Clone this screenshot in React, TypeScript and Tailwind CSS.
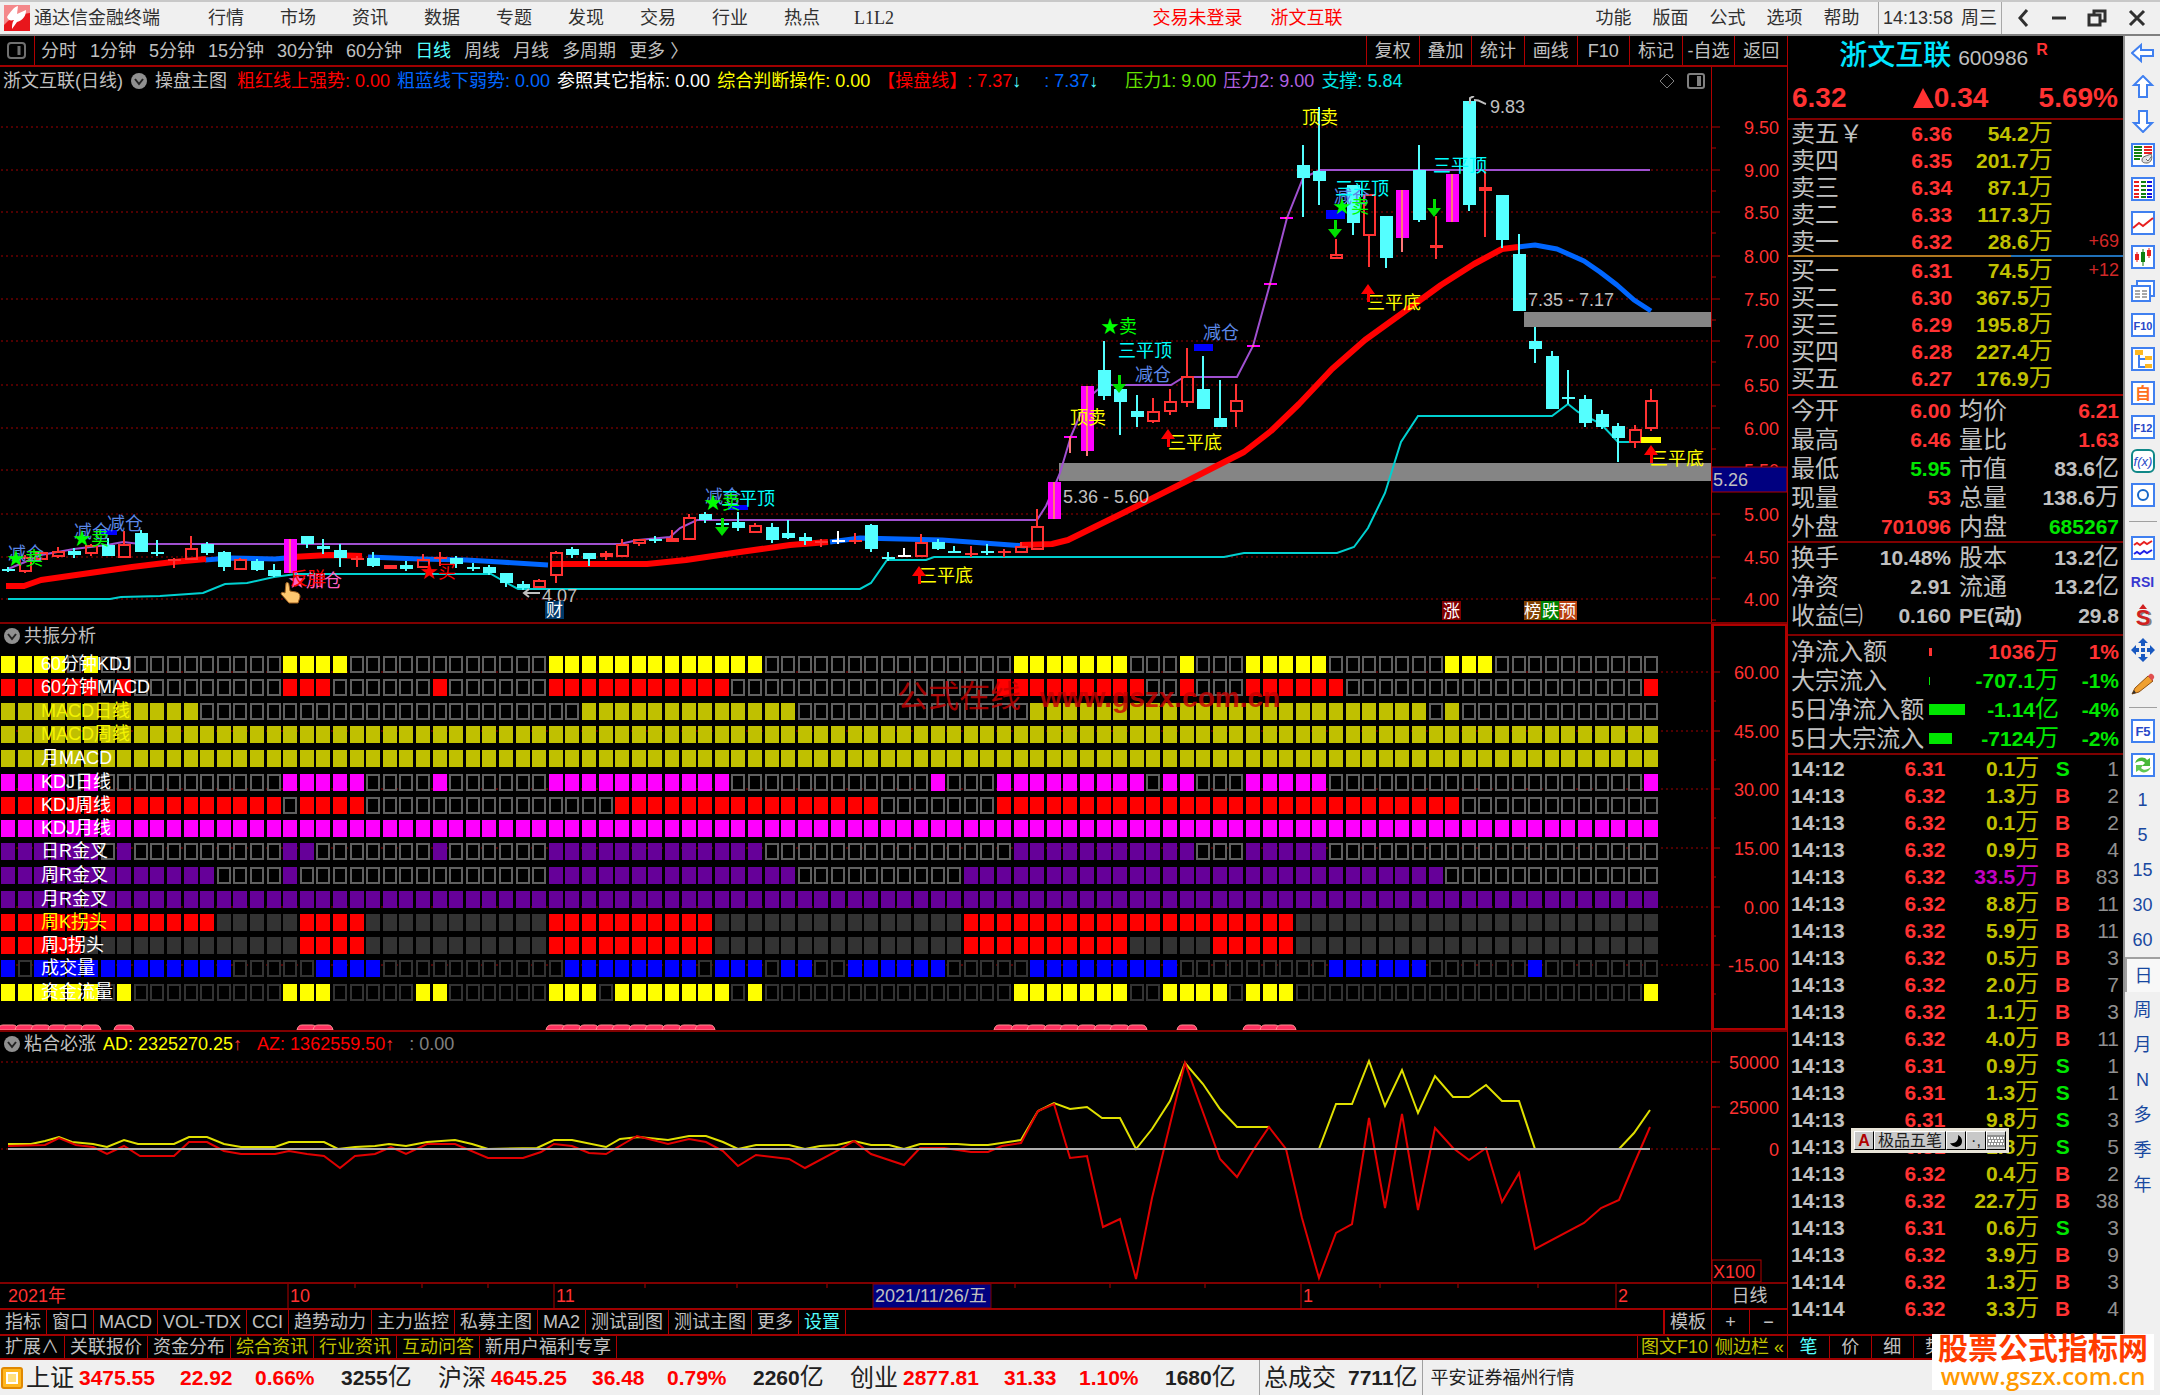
import type { ReactNode } from 'react'
import { clsx } from 'clsx'

const FONT = "font-['Liberation_Sans','Noto_Sans_CJK_SC',sans-serif]"

// ── Data ──────────────────────────────────────────────────────────────────

const mainMenu = ['行情', '市场', '资讯', '数据', '专题', '发现', '交易', '行业', '热点', 'L1L2']
const toolMenu = ['功能', '版面', '公式', '选项', '帮助']
const periods = ['分时', '1分钟', '5分钟', '15分钟', '30分钟', '60分钟', '日线', '周线', '月线', '多周期', '更多 〉']
const chartActions = ['复权', '叠加', '统计', '画线', 'F10', '标记', '-自选', '返回']

const indicatorTabs = ['指标', '窗口', 'MACD', 'VOL-TDX', 'CCI', '趋势动力', '主力监控', '私募主图', 'MA2', '测试副图', '测试主图', '更多', '设置']
const infoTabs = [
  { label: '扩展∧', color: 'text-[#c0c0c0]' },
  { label: '关联报价', color: 'text-[#c0c0c0]' },
  { label: '资金分布', color: 'text-[#c0c0c0]' },
  { label: '综合资讯', color: 'text-[#c0c000]' },
  { label: '行业资讯', color: 'text-[#c0c000]' },
  { label: '互动问答', color: 'text-[#c0c000]' },
  { label: '新用户福利专享', color: 'text-[#c0c0c0]' },
]

type Kind = 'up' | 'down' | 'limit' | 'red' | 'flat'
type Candle = [Kind, number, number, number, number]

// kind, high, body top, body bottom, low
const candles: Candle[] = [
  ['down', 567, 569, 571, 572], ['up', 555, 557, 571, 573], ['up', 552, 552, 559, 559], ['up', 547, 551, 556, 558],
  ['down', 548, 551, 555, 558], ['up', 544, 545, 553, 556], ['down', 538, 545, 556, 556], ['up', 531, 544, 557, 557],
  ['down', 530, 533, 552, 552], ['down', 540, 552, 553, 556], ['red', 558, 559, 561, 568], ['up', 536, 548, 559, 559],
  ['down', 542, 544, 553, 555], ['down', 551, 552, 567, 571], ['up', 558, 559, 569, 570], ['down', 559, 561, 570, 571],
  ['down', 564, 570, 576, 577], ['limit', 539, 539, 573, 573], ['down', 536, 536, 544, 548], ['down', 539, 546, 549, 554],
  ['down', 544, 550, 558, 567], ['red', 556, 558, 559, 567], ['down', 552, 558, 566, 567], ['up', 565, 565, 568, 568],
  ['down', 561, 565, 569, 571], ['up', 554, 559, 567, 568], ['red', 552, 557, 558, 566], ['down', 556, 558, 564, 568],
  ['down', 563, 567, 568, 571], ['down', 565, 567, 573, 575], ['down', 573, 573, 583, 587], ['down', 581, 584, 588, 590],
  ['up', 579, 580, 587, 588], ['up', 551, 552, 575, 583], ['down', 547, 549, 555, 558], ['down', 553, 553, 559, 566],
  ['up', 551, 553, 556, 560], ['up', 539, 544, 556, 557], ['up', 539, 539, 543, 546], ['down', 536, 539, 540, 543],
  ['up', 530, 538, 541, 541], ['up', 514, 517, 539, 539], ['down', 512, 514, 520, 523], ['down', 518, 523, 524, 527],
  ['down', 512, 522, 528, 531], ['up', 523, 525, 532, 532], ['down', 523, 527, 540, 543], ['down', 520, 533, 538, 539],
  ['down', 533, 537, 541, 545], ['red', 539, 541, 542, 547], ['flat', 531, 540, 541, 544], ['red', 533, 540, 541, 544],
  ['down', 524, 525, 549, 552], ['down', 552, 557, 558, 561], ['flat', 548, 555, 556, 556], ['up', 534, 542, 556, 557],
  ['down', 539, 542, 549, 550], ['down', 546, 551, 552, 552], ['red', 546, 553, 555, 557], ['down', 544, 551, 552, 555],
  ['red', 549, 551, 553, 557], ['up', 542, 546, 552, 552], ['up', 509, 526, 549, 549], ['limit', 482, 482, 519, 519],
  ['limit', 436, 436, 438, 453], ['limit', 386, 386, 451, 456], ['down', 341, 370, 396, 400], ['down', 375, 389, 402, 435],
  ['down', 395, 411, 417, 427], ['up', 398, 411, 421, 423], ['up', 389, 401, 411, 415], ['up', 348, 376, 402, 407],
  ['down', 356, 389, 409, 409], ['down', 380, 418, 427, 427], ['up', 384, 400, 411, 427], ['limit', 345, 345, 347, 347],
  ['limit', 283, 283, 285, 285], ['limit', 217, 217, 219, 219], ['down', 145, 165, 178, 217], ['down', 107, 171, 181, 205],
  ['up', 239, 254, 258, 258], ['down', 185, 185, 223, 235], ['up', 194, 194, 235, 267], ['down', 216, 216, 258, 268],
  ['limit', 190, 190, 238, 252], ['down', 145, 170, 220, 222], ['red', 216, 245, 248, 259], ['limit', 174, 174, 222, 222],
  ['down', 101, 101, 205, 211], ['up', 170, 187, 190, 237], ['down', 195, 195, 240, 248], ['down', 234, 254, 311, 311],
  ['down', 327, 341, 349, 363], ['down', 351, 356, 409, 409], ['down', 370, 397, 399, 404], ['down', 395, 399, 423, 427],
  ['down', 410, 414, 427, 429], ['down', 423, 426, 438, 462], ['up', 425, 429, 442, 448], ['up', 389, 400, 428, 431],
]

const candleColor: Record<Kind, string> = {
  up: '#ff3232',
  down: '#54ffff',
  limit: '#ff00ff',
  red: '#ff3232',
  flat: '#ffffff',
}

const barX = (i: number) => Math.round(8 + i * 16.6)

const priceTicks = [
  ['9.50', 127], ['9.00', 170], ['8.50', 212], ['8.00', 256], ['7.50', 299], ['7.00', 341],
  ['6.50', 385], ['6.00', 428], ['5.50', 470], ['5.00', 514], ['4.50', 557], ['4.00', 599],
] as [string, number][]
const heatTicks = [
  ['60.00', 671], ['45.00', 730], ['30.00', 788], ['15.00', 847], ['0.00', 906], ['-15.00', 964],
] as [string, number][]
const volTicks = [['50000', 1061], ['25000', 1106], ['0', 1148]] as [string, number][]

const heatRows = [
  { label: '60分钟KDJ', y: 655, on: '0-3,5,17-20,33-45,61-67,71,75-79,87-89', fill: '#ffff00', off: '#606060' },
  { label: '60分钟MACD', y: 678, on: '0-5,7,17-19,26,33-43,60-68,71,75-80,99', fill: '#ff0000', off: '#606060' },
  { label: 'MACD日线', y: 702, on: '0-11,35-47,62-85,87', fill: '#c0c000', off: '#606060', text: '#f4f400' },
  { label: 'MACD周线', y: 725, on: '0-99', fill: '#c0c000', off: '#606060', text: '#f4f400' },
  { label: '月MACD', y: 749, on: '0-99', fill: '#c0c000', off: '#606060' },
  { label: 'KDJ日线', y: 773, on: '0-3,5,17-21,26,33-43,56,60-68,70-71,75-79,99', fill: '#ff00ff', off: '#606060' },
  { label: 'KDJ周线', y: 796, on: '0-16,18-21,37-52,60-87', fill: '#ff0000', off: '#606060' },
  { label: 'KDJ月线', y: 819, on: '0-99', fill: '#ff00ff', off: '#606060' },
  { label: '日R金叉', y: 842, on: '0-5,7,17-18,26,33-45,61-71,75-79', fill: '#660099', off: '#606060' },
  { label: '周R金叉', y: 866, on: '0-12,17,33-47,58-86', fill: '#660099', off: '#606060' },
  { label: '月R金叉', y: 890, on: '0-99', fill: '#660099', off: '#606060' },
  { label: '周K拐头', y: 913, on: '0-12,18-21,33-42,58-77', fill: '#ff0000', off: '#333333', solid: true, text: '#ffff00' },
  { label: '周J拐头', y: 936, on: '0-4,18-21,33-42,58-67,73-77', fill: '#ff0000', off: '#333333', solid: true },
  { label: '成交量', y: 959, on: '0,2-13,19-22,34-41,43-45,47-48,51-56,62-70,80-85,92', fill: '#0000ff', off: '#333333' },
  { label: '资金流量', y: 983, on: '0-5,7,17-19,25-26,33-35,37-43,45,61-67,70-73,75-77,99', fill: '#ffff00', off: '#333333' },
]
const heatCaps = '0-5,7,18-19,33-42,60-68,71,75-77'

const asks = [
  ['卖五￥', '6.36', '54.2', ''], ['卖四', '6.35', '201.7', ''], ['卖三', '6.34', '87.1', ''],
  ['卖二', '6.33', '117.3', ''], ['卖一', '6.32', '28.6', '+69'],
]
const bids = [
  ['买一', '6.31', '74.5', '+12'], ['买二', '6.30', '367.5', ''], ['买三', '6.29', '195.8', ''],
  ['买四', '6.28', '227.4', ''], ['买五', '6.27', '176.9', ''],
]

const RED = 'text-[#ff3232]'
const GREEN = 'text-[#00e600]'
const GRAY = 'text-[#c0c0c0]'

const statsA = [
  ['今开', '6.00', RED, '均价', '6.21', RED],
  ['最高', '6.46', RED, '量比', '1.63', RED],
  ['最低', '5.95', GREEN, '市值', '83.6亿', GRAY],
  ['现量', '53', RED, '总量', '138.6万', GRAY],
  ['外盘', '701096', RED, '内盘', '685267', GREEN],
]
const statsB = [
  ['换手', '10.48%', GRAY, '股本', '13.2亿', GRAY],
  ['净资', '2.91', GRAY, '流通', '13.2亿', GRAY],
  ['收益㈢', '0.160', GRAY, 'PE(动)', '29.8', GRAY],
]

const flows = [
  { label: '净流入额', bar: 'w-[3px] h-2 bg-[#ff3232]', value: '1036万', pct: '1%', color: RED },
  { label: '大宗流入', bar: 'w-px h-2 bg-[#00e600]', value: '-707.1万', pct: '-1%', color: GREEN },
  { label: '5日净流入额', bar: 'w-9 h-[11px] bg-[#00e600]', value: '-1.14亿', pct: '-4%', color: GREEN },
  { label: '5日大宗流入', bar: 'w-[23px] h-[11px] bg-[#00e600]', value: '-7124万', pct: '-2%', color: GREEN },
]

const ticks = [
  ['14:12', '6.31', '0.1', 'S', '1'], ['14:13', '6.32', '1.3', 'B', '2'], ['14:13', '6.32', '0.1', 'B', '2'],
  ['14:13', '6.32', '0.9', 'B', '4'], ['14:13', '6.32', '33.5', 'B', '83'], ['14:13', '6.32', '8.8', 'B', '11'],
  ['14:13', '6.32', '5.9', 'B', '11'], ['14:13', '6.32', '0.5', 'B', '3'], ['14:13', '6.32', '2.0', 'B', '7'],
  ['14:13', '6.32', '1.1', 'B', '3'], ['14:13', '6.32', '4.0', 'B', '11'], ['14:13', '6.31', '0.9', 'S', '1'],
  ['14:13', '6.31', '1.3', 'S', '1'], ['14:13', '6.31', '9.8', 'S', '3'], ['14:13', '6.31', '1.8', 'S', '5'],
  ['14:13', '6.32', '0.4', 'B', '2'], ['14:13', '6.32', '22.7', 'B', '38'], ['14:13', '6.31', '0.6', 'S', '3'],
  ['14:13', '6.32', '3.9', 'B', '9'], ['14:14', '6.32', '1.3', 'B', '3'], ['14:14', '6.32', '3.3', 'B', '4'],
]

const indices = [
  { name: '上证', value: '3475.55', change: '22.92', pct: '0.66%', amount: '3255' },
  { name: '沪深', value: '4645.25', change: '36.48', pct: '0.79%', amount: '2260' },
  { name: '创业', value: '2877.81', change: '31.33', pct: '1.10%', amount: '1680' },
]

// '0-3,5' -> Set {0,1,2,3,5}
function expand(ranges: string) {
  const out = new Set<number>()
  ranges.split(',').forEach((part) => {
    const [a, b] = part.split('-').map(Number)
    for (let i = a; i <= (b ?? a); i++) out.add(i)
  })
  return out
}

// Values such as 138.6万: bold number, regular unit
function Amount({ text }: { text: string }) {
  const m = text.match(/^(.*?)([万亿]?)$/)
  return (
    <>
      {m?.[1]}
      <span className="text-2xl leading-0 font-normal">{m?.[2]}</span>
    </>
  )
}

// ── Title bar ─────────────────────────────────────────────────────────────

function TitleBar() {
  return (
    <header className="flex h-9 items-center border-t-2 border-b-2 border-t-[#c8c8c8] border-b-[#808080] bg-[#f0f0f0] text-lg text-[#303030]">
      <svg className="ml-1 h-[26px] w-[26px]" viewBox="0 0 26 26" aria-hidden>
        <rect width="26" height="26" fill="#e8161c" />
        <path d="M0 0h26v8L12 10 4 16 0 20z" fill="#f4888a" />
        <path d="M3 12C7 6 10 2 14 1l-1 8 9-4c0 6-3 10-9 12l-5 7c0-4 0-6 2-9-4 1-6 0-7-3z" fill="#fff" />
      </svg>
      <span className="ml-1 w-[156px]">通达信金融终端</span>
      <nav className="flex">
        {mainMenu.map((m) => (
          <button key={m} className={clsx('w-18 text-center', m === 'L1L2' && "font-['Liberation_Serif',serif]")}>
            {m}
          </button>
        ))}
      </nav>
      <span className="ml-auto text-[#ff0000]">交易未登录</span>
      <a href="#stock" className="ml-7 text-[#ff0000]">浙文互联</a>
      <nav className="ml-auto flex">
        {toolMenu.map((m) => (
          <button key={m} className="w-[57px] text-center">{m}</button>
        ))}
      </nav>
      <div className="ml-2 flex h-full items-center gap-2 border-x border-[#a8a8a8] px-1">
        <span>14:13:58</span>
        <span>周三</span>
      </div>
      <div className="flex w-[158px] items-center justify-around px-1">
        <button aria-label="折叠">
          <svg width="14" height="18" viewBox="0 0 14 18" fill="none" stroke="#303030" strokeWidth="3"><path d="M11 1 4 9l7 8" /></svg>
        </button>
        <button aria-label="最小化">
          <svg width="16" height="18" viewBox="0 0 16 18" fill="none" stroke="#303030" strokeWidth="3"><path d="M1 9h14" /></svg>
        </button>
        <button aria-label="还原">
          <svg width="20" height="18" viewBox="0 0 20 18" fill="none" stroke="#303030" strokeWidth="3"><path d="M2 6h11v10H2zM7 6V2h11v10h-4" /></svg>
        </button>
        <button aria-label="关闭">
          <svg width="18" height="18" viewBox="0 0 18 18" fill="none" stroke="#303030" strokeWidth="3"><path d="m2 2 14 14M16 2 2 16" /></svg>
        </button>
      </div>
    </header>
  )
}

function PeriodBar() {
  return (
    <div className="flex h-[31px] items-center border-b-2 border-[#a00000] text-lg text-[#c0c0c0]">
      <button aria-label="侧栏" className="flex h-full w-[35px] items-center justify-center border-r border-[#b00000]">
        <svg width="20" height="17" viewBox="0 0 20 17" fill="none" stroke="#707070" strokeWidth="2">
          <rect x="1" y="1" width="17" height="15" rx="3" />
          <path d="M12 4v9" strokeWidth="3" />
        </svg>
      </button>
      <nav className="ml-[6px] flex gap-[13px]">
        {periods.map((p) => (
          <button key={p} className={clsx(p === '日线' && 'text-[#54ffff]')}>{p}</button>
        ))}
      </nav>
      <nav className="ml-auto grid h-full w-[421px] grid-cols-8">
        {chartActions.map((a) => (
          <button key={a} className="border-l border-[#b00000]">{a}</button>
        ))}
      </nav>
    </div>
  )
}

function Fold() {
  return (
    <button aria-label="展开">
      <svg width="18" height="18" viewBox="0 0 18 18">
        <circle cx="9" cy="9" r="8" fill="#909090" />
        <path d="m5 7 4 5 4-5" fill="none" stroke="#222" strokeWidth="2" />
      </svg>
    </button>
  )
}

// ── Charts ────────────────────────────────────────────────────────────────

function Axis({ y, h, rows, minor, children }: { y: number; h: number; rows: [string, number][]; minor: number; children?: ReactNode }) {
  return (
    <svg className="block h-auto w-full" viewBox={`0 ${y} 75 ${h}`} fill="#ff3232" fontSize="18">
      {rows.map(([label, ty]) => (
        <g key={label}>
          <path d={`M0 ${ty}h8M0 ${ty + minor}h4`} stroke="#b00000" />
          <text x="67" y={ty + 7} textAnchor="end">{label}</text>
        </g>
      ))}
      {children}
    </svg>
  )
}

function Grid({ rows }: { rows: number[] }) {
  return (
    <g stroke="#a00000" strokeDasharray="2 3">
      {rows.map((y) => <path key={y} d={`M1 ${y}H1710`} />)}
    </g>
  )
}

function Note({ x, y, fill, children }: { x: number; y: number; fill: string; children: ReactNode }) {
  return <text x={x} y={y + 7} fill={fill} fontSize="18">{children}</text>
}

function Arrow({ x, y, up }: { x: number; y: number; up?: boolean }) {
  return up ? (
    <path d={`M${x} ${y}l7 10h-5v8h-3v-8h-6z`} fill="#ff0000" />
  ) : (
    <path d={`M${x} ${y + 18}l7 -9h-5v-9h-3v9h-6z`} fill="#00e000" />
  )
}

function PriceChart() {
  return (
    <svg className="block h-auto w-full" viewBox="0 96 1711 526">
      <Grid rows={priceTicks.map((t) => t[1])} />
      <g fill="#858585">
        <rect x="1524" y="312" width="187" height="15" />
        <rect x="1059" y="463" width="652" height="18" />
      </g>

      {/* resistance / support */}
      <g fill="none" strokeWidth="2">
        <path
          stroke="#a050d0"
          d="M8 569 25 562 41 555 74 549 107 545 123 542 140 544H620L638 540 670 537 680 528 697 520H1037L1046 506 1053 490 1060 473 1071 436 1087 399 1103 385H1171L1184 377H1237L1253 346 1270 284 1287 218 1303 178 1320 170H1650"
        />
        <path
          stroke="#00d0d0"
          d="M8 599H110L121 597 160 596 203 593 225 584 247 583 274 577 296 574H491L505 582 518 589H860L871 583 887 560H926L934 557H1224L1244 553H1337L1354 547 1368 528 1385 493 1401 442 1418 416H1552L1568 404 1578 412 1601 424 1618 442H1650"
        />
      </g>

      {/* trend line */}
      <g fill="none" strokeLinejoin="round">
        <g stroke="#0066ff" strokeWidth="5">
          <path d="M205 560 230 558 275 559 296 557" />
          <path d="M368 557 420 559 466 560 500 562 548 565" />
          <path d="M830 542 860 538 942 540 1025 546" />
          <path d="M1518 247 1535 245 1557 249 1584 261 1600 272 1617 285 1634 300 1651 311" />
        </g>
        <g stroke="#ff0000" strokeWidth="6">
          <path d="M6 586H24L41 580 90 573 132 567 173 562 206 559" />
          <path d="M292 557 329 555 362 556" />
          <path d="M550 564H647L686 560 740 552 790 545 828 542" />
          <path d="M1020 545 1052 544 1068 540 1123 513 1189 480 1244 452 1271 431 1299 404 1332 369 1365 340 1408 309 1441 285 1474 264 1502 249 1518 247" />
        </g>
      </g>

      {candles.map(([kind, high, top, bottom, low], i) => {
        const x = barX(i)
        const color = candleColor[kind]
        const h = Math.max(bottom - top, 2)
        if (kind === 'up') {
          return (
            <g key={i} fill="none" stroke={color} strokeWidth="2">
              <path d={`M${x} ${high}V${top}M${x} ${bottom}V${low}`} />
              <rect x={x - 5} y={top + 1} width="11" height={Math.max(h - 1, 2)} />
            </g>
          )
        }
        return (
          <g key={i}>
            <rect x={x - 6} y={top} width="13" height={h} fill={color} />
            <path d={`M${x} ${high}V${low}`} stroke={kind === 'limit' ? '#ff7878' : color} strokeWidth="2" />
          </g>
        )
      })}

      <g fill="#0000ff">
        <rect x="99" y="530" width="18" height="5" />
        <rect x="728" y="505" width="20" height="5" />
        <rect x="1194" y="344" width="19" height="7" />
        <rect x="1326" y="210" width="19" height="9" />
      </g>
      <rect x="1641" y="437" width="20" height="6" fill="#ffff00" />

      <Note x={8} y={553} fill="#5c88e8">减仓</Note>
      <Note x={74} y={531} fill="#5c88e8">减仓</Note>
      <Note x={107} y={523} fill="#5c88e8">减仓</Note>
      <Note x={705} y={496} fill="#5c88e8">减仓</Note>
      <Note x={1135} y={374} fill="#5c88e8">减仓</Note>
      <Note x={1203} y={332} fill="#5c88e8">减仓</Note>
      <Note x={1334} y={196} fill="#5c88e8">减仓</Note>

      <Note x={721} y={498} fill="#00ffff">三平顶</Note>
      <Note x={1118} y={350} fill="#00ffff">三平顶</Note>
      <Note x={1335} y={188} fill="#00ffff">三平顶</Note>
      <Note x={1433} y={165} fill="#00ffff">三平顶</Note>

      <Note x={7} y={558} fill="#00ff00">★卖</Note>
      <Note x={73} y={538} fill="#00ff00">★卖</Note>
      <Note x={704} y={502} fill="#00ff00">★卖</Note>
      <Note x={1101} y={326} fill="#00ff00">★卖</Note>
      <Note x={1333} y={206} fill="#00ff00">★卖</Note>

      <Note x={288} y={580} fill="#ff60c0">★加仓</Note>
      <Note x={290} y={578} fill="#ff0000">反弹</Note>
      <Note x={420} y={571} fill="#ff0000">★买</Note>

      <Note x={1070} y={417} fill="#ffff00">顶卖</Note>
      <Note x={1302} y={117} fill="#ffff00">顶卖</Note>
      <Note x={919} y={575} fill="#ffff00">三平底</Note>
      <Note x={1168} y={442} fill="#ffff00">三平底</Note>
      <Note x={1367} y={302} fill="#ffff00">三平底</Note>
      <Note x={1650} y={458} fill="#ffff00">三平底</Note>

      <Note x={1528} y={299} fill="#c0c0c0">7.35 - 7.17</Note>
      <Note x={1063} y={496} fill="#c0c0c0">5.36 - 5.60</Note>
      <Note x={1490} y={106} fill="#c0c0c0">9.83</Note>
      <Note x={542} y={595} fill="#c0c0c0">4.07</Note>
      <g fill="none" stroke="#c0c0c0" strokeWidth="2">
        <path d="M524 593h16M529 589l-5 4 5 4" />
        <path d="M1486 104c-4-1-5-4-12-4M1470 104v-6l4-2" />
      </g>

      <Arrow up x={919} y={566} />
      <Arrow up x={1168} y={429} />
      <Arrow up x={1368} y={284} />
      <Arrow up x={1651} y={445} />
      <Arrow x={722} y={518} />
      <Arrow x={1119} y={375} />
      <Arrow x={1335} y={220} />
      <Arrow x={1434} y={199} />

      {/* pointing hand */}
      <path d="M286 583c2-1 3 0 3 2l1 6 6 1c3 1 4 2 4 5l-2 6h-9l-8-9c0-2 2-2 4-1z" fill="#ffc870" stroke="#a06020" />

      {/* event badges */}
      <g fontSize="17" fill="#fff">
        <rect x="545" y="601" width="19" height="18" fill="#003868" />
        <text x="546" y="616">财</text>
        <rect x="1442" y="601" width="19" height="19" fill="#800000" />
        <text x="1443" y="617">涨</text>
        <rect x="1524" y="601" width="18" height="19" fill="#804000" />
        <rect x="1541" y="601" width="18" height="19" fill="#008000" />
        <rect x="1559" y="601" width="18" height="19" fill="#b84010" />
        <text x="1524" y="617">榜</text>
        <text x="1542" y="617">跌</text>
        <text x="1559" y="617">预</text>
      </g>
    </svg>
  )
}

function HeatChart() {
  return (
    <svg className="block h-auto w-full" viewBox="0 647 1711 382">
      <Grid rows={heatTicks.map((t) => t[1])} />
      {heatRows.map((row) => {
        const on = expand(row.on)
        return (
          <g key={row.label}>
            {candles.map((_, i) => {
              const x = barX(i) - 7
              if (on.has(i)) return <rect key={i} x={x} y={row.y} width="14" height="17" fill={row.fill} />
              return row.solid ? (
                <rect key={i} x={x} y={row.y} width="14" height="17" fill={row.off} />
              ) : (
                <rect key={i} x={x + 1} y={row.y + 1} width="12" height="15" fill="#000" stroke={row.off} strokeWidth="2" />
              )
            })}
            <text x="41" y={row.y + 14} fontSize="18" fill={row.text ?? '#fff'}>{row.label}</text>
          </g>
        )
      })}
      {[...expand(heatCaps)].map((i) => (
        <path key={i} d={`M${barX(i) - 10} 1029q1 -5 5 -5h10q4 0 5 5z`} fill="#ff3060" stroke="#ff9090" />
      ))}
      <g fill="#c80000" opacity="0.8">
        <text x="897" y="706" fontSize="31">公式在线</text>
        <text x="1040" y="706" fontSize="28" fontWeight="bold">www.gszx.com.cn</text>
      </g>
    </svg>
  )
}

function FlowChart() {
  return (
    <svg className="block h-auto w-full" viewBox="0 1055 1711 226">
      <Grid rows={[1061, 1148]} />
      <g fill="none" strokeWidth="2">
        <path
          stroke="#e0e000"
          d="M8 1143H31L45 1140 59 1136 72 1141 93 1143 107 1146 124 1139 138 1143H174L189 1136H207L224 1143 241 1146H275L289 1141H324L338 1148 355 1146 375 1145 389 1143 406 1145 427 1141 455 1139 472 1143 488 1148 537 1147 554 1139H572L606 1146 620 1138 639 1136 668 1139 689 1135H706L723 1141 738 1148 756 1144H789L805 1148 820 1145 837 1144 854 1140 871 1144H889L904 1148 920 1143H957L971 1144H988L1021 1139 1038 1110 1054 1102 1070 1108 1087 1106 1102 1117H1120L1136 1148 1152 1128 1170 1100 1185 1062 1203 1083 1220 1108 1237 1126H1269"
        />
        <path
          stroke="#e0e000"
          d="M1319 1148 1336 1103H1352L1369 1060 1385 1105 1402 1069 1418 1112 1435 1075 1453 1096H1469L1486 1084 1502 1100H1519L1535 1148H1619L1634 1132 1650 1109"
        />
        <path
          stroke="#e00000"
          d="M8 1145 45 1144 59 1137 76 1144 93 1146 107 1153 124 1145 140 1155H174L189 1141H207L224 1150 241 1153H275L289 1150 307 1153 324 1155 340 1167 355 1155 375 1153 391 1146 406 1153 427 1143 455 1143 488 1157H523L541 1151 554 1143 572 1145 589 1152 606 1153 637 1135 668 1143 689 1138 706 1141 723 1150 738 1165 756 1154 789 1158 805 1167 837 1150 854 1140 871 1153 904 1164 920 1147H944L971 1151H988L1002 1145 1021 1142 1038 1110 1054 1103 1070 1157 1087 1155 1103 1226 1120 1218 1136 1278 1152 1197 1185 1062 1220 1158 1237 1176 1254 1148 1269 1126 1286 1148 1302 1217 1319 1277 1336 1232 1352 1223 1369 1117 1385 1207 1402 1113 1418 1209 1435 1127 1453 1147 1469 1159 1486 1147 1502 1201 1519 1172 1535 1248 1584 1222 1601 1207 1619 1199 1634 1163 1650 1126"
        />
        <path stroke="#b0b0b0" d="M8 1148H1650" />
      </g>
    </svg>
  )
}

function Panel({ caption, chart, axis, active }: { caption: ReactNode; chart: ReactNode; axis: ReactNode; active?: boolean }) {
  return (
    <section className="flex border-b-2 border-[#800000]">
      <div className="min-w-0 flex-1">
        <div className="flex h-6 items-center gap-[7px] px-[3px] text-lg whitespace-pre text-[#c0c0c0]">{caption}</div>
        {chart}
      </div>
      <div className={clsx('w-[76px] border-l border-[#b00000]', active && 'ring-2 ring-[#b00000] ring-inset')}>{axis}</div>
    </section>
  )
}

function TimeAxis() {
  const minor = [355, 422, 488, 645, 737, 827, 1015, 1110, 1205, 1380, 1458, 1538]
  const months: [string, number][] = [['10', 288], ['11', 554], ['1', 1301], ['2', 1616]]
  return (
    <div className="flex h-6 text-lg">
      <svg className="block h-6 min-w-0 flex-1" viewBox="0 0 1711 24" preserveAspectRatio="xMinYMin" fill="#ff3232" fontSize="18">
        <path d={minor.map((x) => `M${x} 0v4`).join('')} stroke="#b00000" />
        <text x="8" y="18">2021年</text>
        {months.map(([m, x]) => (
          <g key={m}>
            <path d={`M${x} 0v24`} stroke="#b00000" />
            <text x={x + 2} y="18">{m}</text>
          </g>
        ))}
        <rect x="873" y="0" width="118" height="24" fill="#000080" stroke="#800000" />
        <text x="875" y="18" fill="#c0c0c0">2021/11/26/五</text>
      </svg>
      <div className="flex w-[76px] items-center justify-center border-l border-[#b00000] text-[#c0c0c0]">日线</div>
    </div>
  )
}

function BottomTabs() {
  return (
    <>
      <nav className="flex h-[26px] border-t-2 border-[#a00000] text-lg/6 text-[#c0c0c0]">
        {indicatorTabs.map((t) => (
          <button key={t} className={clsx('border-r border-[#b00000] px-[5px]', t === '设置' && 'text-[#54ffff]')}>{t}</button>
        ))}
        <button className="ml-auto border-l-2 border-[#b00000] px-[5px]">模板</button>
        <button className="w-[38px] border-l border-[#b00000]">+</button>
        <button className="w-[38px] border-l border-[#b00000]">−</button>
      </nav>
      <nav className="flex h-[26px] border-y-2 border-[#a00000] text-lg/[22px]">
        {infoTabs.map((t) => (
          <button key={t.label} className={clsx('border-r border-[#b00000] px-[5px]', t.color)}>{t.label}</button>
        ))}
        <button className="ml-auto w-[74px] border-l border-[#b00000] whitespace-nowrap text-[#c0c000]">图文F10</button>
        <button className="w-[76px] border-l border-[#b00000] whitespace-nowrap text-[#c0c000]">侧边栏 «</button>
      </nav>
    </>
  )
}

// ── Quote side panel ──────────────────────────────────────────────────────

function Book({ rows }: { rows: string[][] }) {
  return (
    <table className="w-full table-fixed text-[21px]/[27px] font-bold">
      <tbody>
        {rows.map(([label, price, vol, delta]) => (
          <tr key={label} className="h-[27px]">
            <th className="w-[26%] p-0 pl-[3px] text-left text-2xl/[27px] font-normal whitespace-nowrap text-[#c0c0c0]">{label}</th>
            <td className="w-[23%] p-0 text-right text-[#ff3232]">{price}</td>
            <td className="w-[30%] p-0 text-right whitespace-nowrap text-[#c0c000]">
              <Amount text={`${vol}万`} />
            </td>
            <td className="p-0 pr-1 text-right text-lg/[27px] font-normal text-[#d02828]">{delta}</td>
          </tr>
        ))}
      </tbody>
    </table>
  )
}

function Stats({ rows }: { rows: string[][] }) {
  return (
    <dl>
      {rows.map(([a, av, ac, b, bv, bc]) => (
        <div key={a} className="flex h-[29px] items-center text-[21px] font-bold whitespace-nowrap">
          <dt className="pl-[3px] text-2xl/[29px] font-normal text-[#c0c0c0]">{a}</dt>
          <dd className={clsx('flex-1 text-right', ac)}>{av}</dd>
          <div className="flex w-[172px] items-center justify-between pr-1 pl-2">
            <dt className={clsx('text-[#c0c0c0]', b === 'PE(动)' ? 'font-bold' : 'text-2xl/[29px] font-normal')}>{b}</dt>
            <dd className={bc}><Amount text={bv} /></dd>
          </div>
        </div>
      ))}
    </dl>
  )
}

function QuotePanel() {
  return (
    <aside className="flex w-[336px] shrink-0 flex-col border-l border-[#b00000]">
      <div className="h-[84px] border-b-2 border-[#800000]">
        <div className="flex h-10 items-center justify-center pr-6">
          <h1 className="text-[28px] font-medium text-[#00e5ff]">浙文互联</h1>
          <span className="ml-[7px] pt-1 text-[21px] text-[#c0c0c0]">600986</span>
          <span className="ml-2 -mt-3 text-base font-bold text-[#ff3232]">R</span>
        </div>
        <div className="flex h-11 items-center justify-between pr-[5px] pl-1 text-[28px] font-bold text-[#ff3232]">
          <span>6.32</span>
          <span className="flex items-center pl-4">
            <svg width="21" height="20" viewBox="0 0 21 20"><path d="M10 0 21 20H0z" fill="#ff3232" /></svg>
            0.34
          </span>
          <span>5.69%</span>
        </div>
      </div>
      <Book rows={asks} />
      <div className="flex h-[2px]">
        <div className="w-2/3 bg-[#b07820]" />
        <div className="flex-1 bg-[#2070b8]" />
      </div>
      <div className="border-b-2 border-[#a00000] pb-[2px]"><Book rows={bids} /></div>
      <div className="border-b-2 border-[#800000]"><Stats rows={statsA} /></div>
      <div className="border-b-2 border-[#800000] pb-1"><Stats rows={statsB} /></div>
      <dl className="border-b-2 border-[#800000] pt-px">
        {flows.map((f) => (
          <div key={f.label} className={clsx('flex h-[29px] items-center text-[21px] font-bold whitespace-nowrap', f.color)}>
            <dt className="w-[141px] pl-[3px] text-2xl/[29px] font-normal text-[#c0c0c0]">{f.label}</dt>
            <dd className={f.bar} />
            <dd className="flex-1 text-right"><Amount text={f.value} /></dd>
            <dd className="w-16 pr-1 text-right">{f.pct}</dd>
          </div>
        ))}
      </dl>
      <table className="w-full table-fixed text-[21px]/[27px] font-bold">
        <tbody>
          {ticks.map(([time, price, vol, side, n], i) => (
            <tr key={i} className="h-[27px]">
              <td className="w-[22%] p-0 pl-[3px] text-[#c0c0c0]">{time}</td>
              <td className="w-[25%] p-0 text-right text-[#ff3232]">{price}</td>
              <td className={clsx('w-[28%] p-0 text-right', vol === '33.5' ? 'text-[#c000c0]' : 'text-[#c0c000]')}>
                <Amount text={`${vol}万`} />
              </td>
              <td className={clsx('w-[14%] p-0 text-center', side === 'B' ? 'text-[#ff3232]' : 'text-[#00e600]')}>{side}</td>
              <td className="p-0 pr-1 text-right font-normal text-[#909090]">{n}</td>
            </tr>
          ))}
        </tbody>
      </table>
      <nav className="mt-auto grid h-[26px] grid-cols-8 border-y-2 border-[#a00000] text-lg/[22px] text-[#c0c0c0]">
        {['笔', '价', '细', '势', '联', '值', '主', '筹'].map((t, i) => (
          <button key={t} className={clsx('border-r border-[#b00000]', i === 0 && 'text-[#54ffff]')}>{t}</button>
        ))}
      </nav>
    </aside>
  )
}

// ── Right toolbar ─────────────────────────────────────────────────────────

function Glyph({ children, frame = '#4080f0' }: { children: ReactNode; frame?: string }) {
  return (
    <svg width="24" height="24" viewBox="0 0 24 24" fill="none">
      {frame !== 'none' && <rect x="1" y="1" width="22" height="22" fill="#fff" stroke={frame} strokeWidth="2" />}
      {children}
    </svg>
  )
}

const glyphText = { textAnchor: 'middle' as const, x: 12, fontWeight: 'bold' as const, fill: '#2848c8' }

const toolsTop: [string, ReactNode][] = [
  ['后退', <Glyph frame="none"><path d="M1 12 10 4v5h12v6H10v5z" fill="#fff" stroke="#4080f0" strokeWidth="2" /></Glyph>],
  ['上', <Glyph frame="none"><path d="m12 1 9 9h-5v12H8V10H3z" fill="#fff" stroke="#4080f0" strokeWidth="2" /></Glyph>],
  ['下', <Glyph frame="none"><path d="m12 23 9-9h-5V2H8v12H3z" fill="#fff" stroke="#4080f0" strokeWidth="2" /></Glyph>],
  ['自选', (
    <Glyph>
      <path d="M3 4h8M3 7h8M3 10h8M3 13h8M3 16h6" stroke="#108010" strokeWidth="2" />
      <path d="M13 4h8M13 7h8M13 10h8" stroke="#e82020" strokeWidth="2" />
      <path d="M11 17c0-4 5-4 9-6 2 4 0 9-4 9s-5-1-5-3zM15 16l2 2 3-4" fill="#e0e0e0" stroke="#606060" />
    </Glyph>
  )],
  ['行情', (
    <Glyph>
      <path d="M3 5h5M3 9h5M3 13h5M3 17h5M3 20h5" stroke="#e82020" strokeWidth="2" />
      <path d="M10 5h5M10 9h5M10 13h5M10 17h5M10 20h5" stroke="#108010" strokeWidth="2" />
      <path d="M16 5h5M16 9h5M16 13h5M16 17h5M16 20h5" stroke="#1010e0" strokeWidth="2" />
    </Glyph>
  )],
  ['分时图', <Glyph><path d="m2 17 6-5 4 3 10-8" stroke="#e82020" strokeWidth="2" /></Glyph>],
  ['K线图', (
    <Glyph>
      <path d="M6 7v10M18 3v10" stroke="#e82020" />
      <path d="M4 9h4v6H4zM16 5h4v6h-4z" fill="#e82020" />
      <path d="M12 4v17" stroke="#108010" />
      <path d="M10 7h4v10h-4z" fill="#108010" />
    </Glyph>
  )],
  ['报表', (
    <Glyph frame="none">
      <path d="M6 2h17v15H6z" fill="#fff" stroke="#4080f0" strokeWidth="2" />
      <path d="M1 7h18v15H1z" fill="#fff" stroke="#4080f0" strokeWidth="2" />
      <path d="M4 12h5M11 12h5M4 15h5M11 15h5M4 18h5M11 18h5" stroke="#505050" />
    </Glyph>
  )],
  ['F10', <Glyph><text {...glyphText} y="17" fontSize="11">F10</text></Glyph>],
  ['板块树', (
    <Glyph>
      <path d="M8 8v12h6M8 12h6" stroke="#4080f0" strokeWidth="2" />
      <path d="M4 3h8v5H4zM14 9h7v4h-7zM14 17h7v4h-7z" fill="#ffb820" />
    </Glyph>
  )],
  ['自选股', <Glyph><text {...glyphText} y="18" fontSize="16" fill="#ff7020">自</text></Glyph>],
  ['F12', <Glyph><text {...glyphText} y="17" fontSize="11">F12</text></Glyph>],
  ['公式', (
    <Glyph frame="none">
      <rect x="1" y="1" width="22" height="22" rx="5" fill="#fff" stroke="#108888" strokeWidth="2" />
      <text {...glyphText} y="17" fontSize="13" fontStyle="italic" fontWeight="normal">f(x)</text>
    </Glyph>
  )],
  ['刷新圈', <Glyph><circle cx="12" cy="12" r="5" stroke="#1868c8" strokeWidth="2" /></Glyph>],
]

const toolsMid: [string, ReactNode][] = [
  ['指标', (
    <Glyph>
      <path d="m3 9 3-2 3 2 4-3 3 2 5-3" stroke="#e82020" strokeWidth="2" />
      <path d="m3 18 3-2 3 2 4-3 3 2 5-3" stroke="#2020e8" strokeWidth="2" />
    </Glyph>
  )],
  ['RSI', <span className="text-sm font-bold text-[#3838d0]">RSI</span>],
  ['S', (
    <Glyph frame="none">
      <text {...glyphText} y="22" fontSize="22" fill="#808080" x={14}>S</text>
      <text {...glyphText} y="21" fontSize="22" fill="#d02020">S</text>
      <path d="m12 0 4 5H8z" fill="#d02020" />
    </Glyph>
  )],
  ['移动', (
    <Glyph frame="none">
      <path d="m12 0 5 5h-3v3h-4V5H7zM12 24l5-5h-3v-3h-4v3H7zM0 12l5-5v3h3v4H5v3zM24 12l-5-5v3h-3v4h3v3z" fill="#1858c0" />
      <path d="M10 10h4v4h-4z" fill="#1858c0" />
    </Glyph>
  )],
  ['画笔', (
    <Glyph frame="none">
      <path d="M1 22 4 16 17 4l5 5L8 20z" fill="#f0a030" stroke="#905010" />
      <path d="m17 4 2-2c2-1 5 2 4 4l-2 3z" fill="#e05050" />
      <path d="M1 22l2-4 2 3z" fill="#303030" />
    </Glyph>
  )],
]

const toolsLow: [string, ReactNode][] = [
  ['F5', <Glyph><text {...glyphText} y="17" fontSize="13">F5</text></Glyph>],
  ['刷新', (
    <Glyph>
      <path d="M4 10c2-6 9-7 12-3l3-2v8h-8l3-3c-3-3-6-2-10 0z" fill="#48b838" />
      <path d="M20 14c-2 6-9 7-12 3l-3 2v-7h7l-2 3c3 3 6 2 10-1z" fill="#60c850" />
    </Glyph>
  )],
]

const toolPeriods = ['1', '5', '15', '30', '60', '日', '周', '月', 'N', '多', '季', '年']

function ToolGroup({ items }: { items: [string, ReactNode][] }) {
  return (
    <>
      {items.map(([name, icon]) => (
        <button key={name} aria-label={name} className="flex h-[34px] w-full items-center justify-center">{icon}</button>
      ))}
    </>
  )
}

function ToolRail() {
  return (
    <div className="flex w-[37px] shrink-0 flex-col items-center border-l-2 border-[#909090] bg-[#f0f0f0]">
      <ToolGroup items={toolsTop} />
      <hr className="my-[9px] w-7 border-[#a0a0a0]" />
      <ToolGroup items={toolsMid} />
      <hr className="my-[6px] w-7 border-[#a0a0a0]" />
      <ToolGroup items={toolsLow} />
      {toolPeriods.map((p) => (
        <button
          key={p}
          className={clsx(
            'h-[35px] w-full text-lg text-[#1848a0]',
            p === '日' && 'border-t-2 border-l-2 border-[#a0a0a0] bg-[#f8f8f8]',
          )}
        >
          {p}
        </button>
      ))}
    </div>
  )
}

// ── Status bar ────────────────────────────────────────────────────────────

function StatusBar() {
  return (
    <footer className="flex h-[37px] items-center border-b-2 border-[#203040] bg-[#f0f0f0] text-[21px] whitespace-nowrap text-[#202020]">
      <svg className="ml-px h-[22px] w-[22px]" viewBox="0 0 22 22">
        <rect x="1" y="1" width="20" height="20" rx="2" fill="#ffb820" stroke="#e08800" strokeWidth="2" />
        <rect x="6" y="6" width="10" height="10" fill="#ffe080" stroke="#fff" strokeWidth="2" />
      </svg>
      {indices.map((ix) => (
        <div key={ix.name} className="flex w-[412px] items-center pl-[3px] font-bold text-[#ff0000]">
          <span className="w-[53px] text-2xl font-normal text-[#202020]">{ix.name}</span>
          <span className="w-[101px]">{ix.value}</span>
          <span className="w-[75px]">{ix.change}</span>
          <span className="w-[86px]">{ix.pct}</span>
          <span className="text-[#202020]"><Amount text={`${ix.amount}亿`} /></span>
        </div>
      ))}
      <div className="flex h-full items-center gap-3 border-x border-[#a0a0a0] px-1 font-bold">
        <span className="text-2xl font-normal">总成交</span>
        <span><Amount text="7711亿" /></span>
      </div>
      <span className="ml-2 text-lg">平安证券福州行情</span>
    </footer>
  )
}

function ImeBar() {
  const key = 'flex h-[19px] items-center justify-center border border-t-white border-l-white border-r-black border-b-black bg-[#c8c8c8]'
  return (
    <div className="absolute top-[1128px] right-[151px] flex w-[158px] border-2 border-[#e8e4d8] bg-[#e8e4d8] p-px text-base leading-none text-[#202020]">
      <button className={clsx(key, 'w-5 font-bold text-[#b00000]')}>A</button>
      <button className={clsx(key, 'w-[72px]')}>极品五笔</button>
      <button aria-label="半角" className={clsx(key, 'w-5')}>
        <svg width="14" height="14" viewBox="0 0 14 14"><path d="M9 1c1 6-3 9-8 8 2 5 12 6 12-2 0-3-2-5-4-6z" /></svg>
      </button>
      <button className={clsx(key, 'w-5')}>·,</button>
      <button aria-label="软键盘" className={clsx(key, 'w-5')}>
        <svg width="18" height="12" viewBox="0 0 18 12" stroke="#fff" strokeWidth="2" strokeDasharray="2 1">
          <rect width="18" height="12" fill="#909090" stroke="none" />
          <path d="M1 3h16M2 6h15M1 9h16" />
        </svg>
      </button>
    </div>
  )
}

function SiteStamp() {
  return (
    <a href="#site" className="absolute top-[1334px] right-[6px] flex h-14 w-[222px] flex-col items-center bg-white font-bold whitespace-nowrap">
      <span className="text-[30px]/[30px] text-[#ff3c00]">股票公式指标网</span>
      <span className="font-['Open_Sans',sans-serif] text-2xl/6 font-semibold text-[#ff9900]">www.gszx.com.cn</span>
    </a>
  )
}

export default function App() {
  return (
    <div className={clsx('relative flex min-h-screen flex-col overflow-hidden bg-black', FONT)}>
      <TitleBar />
      <div className="flex flex-1">
        <main className="min-w-0 flex-1">
          <PeriodBar />
          <Panel
            caption={
              <div className="flex flex-1 items-center gap-[7px] pt-1">
                <span>浙文互联(日线)</span>
                <Fold />
                <span>操盘主图</span>
                <span className="pl-[3px] text-[#ff0000]">粗红线上强势: 0.00</span>
                <span className="text-[#0066ff]">粗蓝线下弱势: 0.00</span>
                <span className="text-white">参照其它指标: 0.00</span>
                <span className="text-[#ffff00]">综合判断操作: 0.00</span>
                <span className="text-[#ff0000]">【操盘线】: 7.37<span className="text-[#54ffff]">↓</span></span>
                <span className="pl-4 text-[#0066ff]">: 7.37<span className="text-[#54ffff]">↓</span></span>
                <span className="pl-5 text-[#66e600]">压力1: 9.00</span>
                <span className="text-[#b060e0]">压力2: 9.00</span>
                <span className="text-[#00e5e5]">支撑: 5.84</span>
                <svg className="ml-auto" width="50" height="20" viewBox="0 0 50 20" fill="none" stroke="#808080" strokeWidth="2">
                  <path d="m9 3 7 7-7 7-7-7z" strokeWidth="1" />
                  <rect x="30" y="3" width="16" height="14" rx="2" />
                  <path d="M41 5v10" strokeWidth="4" />
                </svg>
              </div>
            }
            chart={<div className="pt-[5px]"><PriceChart /></div>}
            axis={
              <div className="pt-[29px]">
                <Axis y={96} h={526} rows={priceTicks} minor={21}>
                  <rect x="0" y="467" width="75" height="25" fill="#000080" stroke="#b00000" />
                  <text x="1" y="486" fill="#c0c0c0">5.26</text>
                </Axis>
              </div>
            }
          />
          <Panel
            active
            caption={<><Fold /><span className="-ml-1">共振分析</span></>}
            chart={<HeatChart />}
            axis={<div className="pt-6"><Axis y={647} h={382} rows={heatTicks} minor={29} /></div>}
          />
          <Panel
            caption={
              <>
                <Fold />
                <span className="-ml-1">粘合必涨</span>
                <span className="text-[#ffff00]">AD: 2325270.25<span className="text-[#ff3232]">↑</span></span>
                <span className="pl-2 text-[#ff0000]">AZ: 1362559.50<span className="text-[#ff3232]">↑</span></span>
                <span className="pl-2 text-[#808080]">: 0.00</span>
              </>
            }
            chart={<FlowChart />}
            axis={
              <div className="pt-6">
                <Axis y={1055} h={226} rows={volTicks} minor={0}>
                  <rect x="0" y="1259" width="49" height="22" fill="none" stroke="#b00000" />
                  <text x="1" y="1277">X100</text>
                </Axis>
              </div>
            }
          />
          <TimeAxis />
          <BottomTabs />
        </main>
        <QuotePanel />
        <ToolRail />
      </div>
      <StatusBar />
      <ImeBar />
      <SiteStamp />
    </div>
  )
}
